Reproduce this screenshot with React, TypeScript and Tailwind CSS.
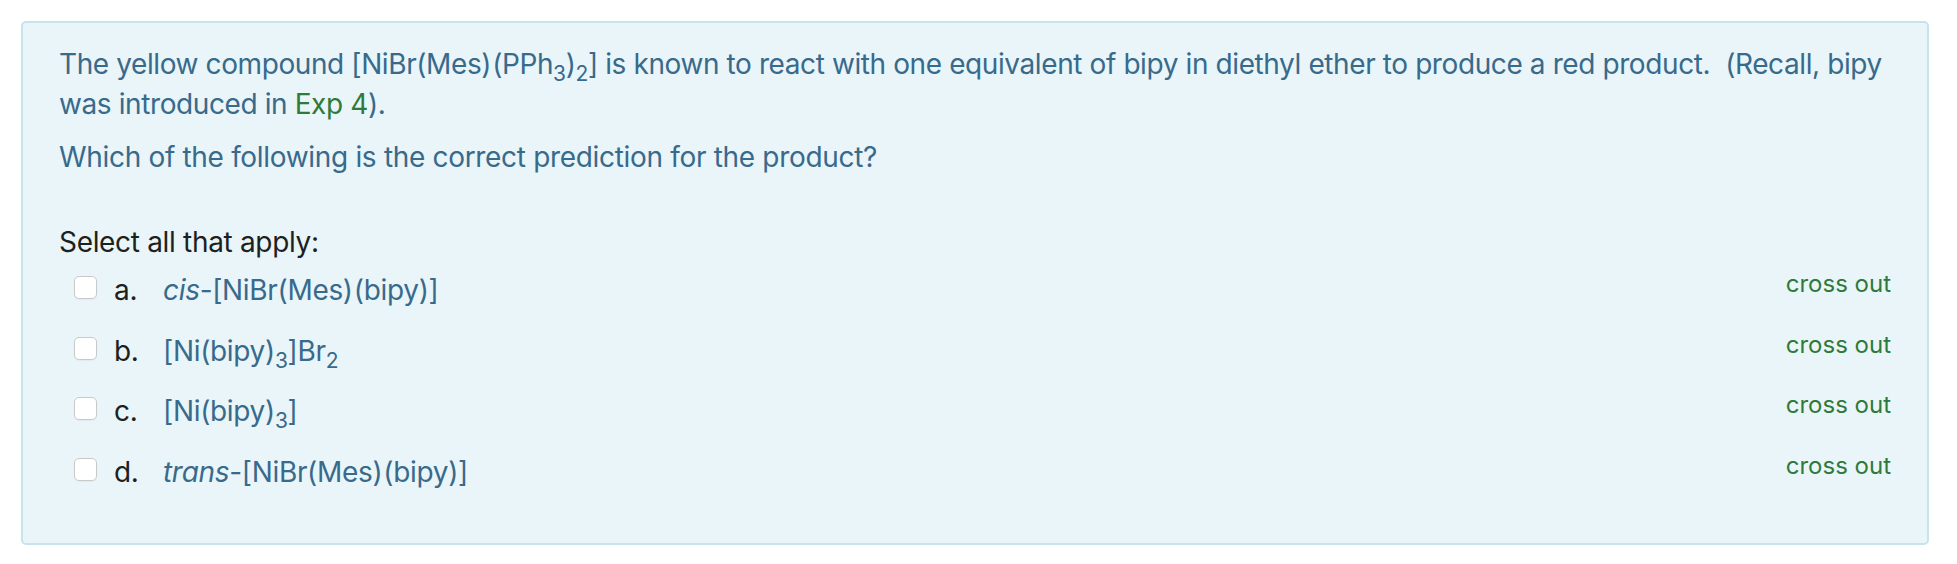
import type { ReactNode } from 'react'

type Choice = {
  key: string
  body: ReactNode
}

// subscripts sit on vertical-align so they don't overlap their neighbours
function Sub({ children }: { children: ReactNode }) {
  return <sub className="bottom-0 align-[-7px] text-[21px] leading-none">{children}</sub>
}

const choices: Choice[] = [
  {
    key: 'a',
    body: (
      <>
        <i>cis</i>-[NiBr(Mes)<span className="ml-[1px]">(bipy)]</span>
      </>
    ),
  },
  {
    key: 'b',
    body: (
      <>
        [Ni(bipy)<Sub>3</Sub>]Br<Sub>2</Sub>
      </>
    ),
  },
  {
    key: 'c',
    body: (
      <>
        [Ni(bipy)<Sub>3</Sub>]
      </>
    ),
  },
  {
    key: 'd',
    body: (
      <>
        <i>trans</i>-[NiBr(Mes)<span className="ml-[1px]">(bipy)]</span>
      </>
    ),
  },
]

export default function App() {
  return (
    <div className="w-[1957px] h-[564px] bg-white pt-[21px] font-['Inter','Noto_Sans',sans-serif] text-[28px] leading-[40px] tracking-[-0.32px]">
      <div className="ml-[21px] w-[1908px] rounded-[5px] border-2 border-[#c6e4ec] bg-[#e9f5f8] px-[36px] pt-[21px] pb-[51px]">
        <div className="text-[#386a8c]">
          <p className="tracking-[-0.4px]">
            The yellow compound [NiBr(Mes)<span className="ml-[1px]">(PPh</span>
            <Sub>3</Sub>)<Sub>2</Sub>] is known to react with one equivalent of bipy in diethyl ether to produce a
            red product.&nbsp; (Recall, bipy was introduced in <span className="text-[#2f7a3a]">Exp 4</span>).
          </p>
          <p className="mt-[13px]">Which of the following is the correct prediction for the product?</p>
        </div>

        <p className="mt-[45px] text-[#1d1f21]">Select all that apply:</p>

        <div className="mt-[8px] flex flex-col gap-[20.7px]">
          {choices.map(c => (
            <div key={c.key} className="flex h-[40px] items-start pl-[15px]">
              <div className="mt-[6px] h-[23px] w-[23px] shrink-0 rounded-[5px] border border-[#c9c9c9] bg-white shadow-[0_1px_1px_rgba(0,0,0,0.04)]" />
              <span className="ml-[17px] w-[49px] shrink-0 text-[#1d1f21]">{c.key}.</span>
              <span className="text-[#386a8c] whitespace-nowrap">{c.body}</span>
              <span className="ml-auto mt-[1px] text-[24px] leading-[26px] tracking-normal text-[#2f7a3a]">cross out</span>
            </div>
          ))}
        </div>
      </div>
    </div>
  )
}
